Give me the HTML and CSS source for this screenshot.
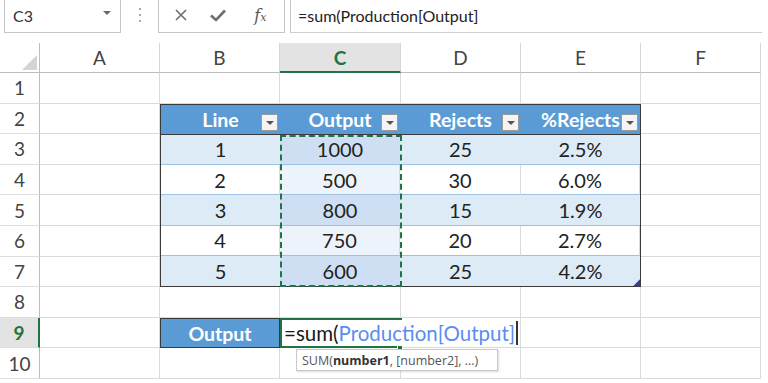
FILE: index.html
```html
<!DOCTYPE html>
<html>
<head>
<meta charset="utf-8">
<link rel="stylesheet" href="styles.css">
</head>
<body>
<div class="app">
  <div class="toolbar">
    <div class="namebox"><span class="nb-text">C3</span><span class="nb-arrow"></span></div>
    <div class="grip"><i></i><i></i><i></i></div>
    <div class="fnbox">
      <span class="slot"><svg width="14" height="14" viewBox="0 0 14 14"><path d="M2 2L12 12M12 2L2 12" stroke="#6e6e6e" stroke-width="1.6" fill="none"/></svg></span>
      <span class="slot"><svg width="18" height="14" viewBox="0 0 18 14"><path d="M2 7.5L7 12L16 2.5" stroke="#6e6e6e" stroke-width="2.6" fill="none"/></svg></span>
      <span class="slot fxslot"><span class="fx">f<span class="fxx">x</span></span></span>
    </div>
    <div class="formula">=sum(Production[Output]</div>
  </div>

  <div class="sheet">
    <!-- column headers -->
    <div class="corner"><svg width="40" height="30" viewBox="0 0 40 30"><polygon points="22,27 37,27 37,12" fill="#d4d4d4"/></svg></div>
    <div class="ch">A</div>
    <div class="ch">B</div>
    <div class="ch sel">C</div>
    <div class="ch">D</div>
    <div class="ch">E</div>
    <div class="ch">F</div>
    <div class="tail"></div>

    <!-- row 1 -->
    <div class="rh">1</div>
    <div class="c"></div><div class="c"></div><div class="c"></div><div class="c"></div><div class="c"></div><div class="c"></div>
    <div class="tail"></div>

    <!-- row 2 -->
    <div class="rh">2</div>
    <div class="c"></div>
    <div class="tbl">
      <div class="th">Line<span class="fbtn"></span></div>
      <div class="th">Output<span class="fbtn"></span></div>
      <div class="th">Rejects<span class="fbtn"></span></div>
      <div class="th">%Rejects<span class="fbtn"></span></div>

      <div class="td b">1</div><div class="td b s">1000</div><div class="td b">25</div><div class="td b">2.5%</div>
      <div class="td w">2</div><div class="td w s">500</div><div class="td w">30</div><div class="td w">6.0%</div>
      <div class="td b">3</div><div class="td b s">800</div><div class="td b">15</div><div class="td b">1.9%</div>
      <div class="td w">4</div><div class="td w s">750</div><div class="td w">20</div><div class="td w">2.7%</div>
      <div class="td b l">5</div><div class="td b s l">600</div><div class="td b l">25</div><div class="td b l">4.2%</div>

      <div class="ants"></div>
      <div class="resize"></div>
    </div>
    <div class="c"></div>
    <div class="tail"></div>

    <!-- rows 3-7 -->
    <div class="rh">3</div><div class="c"></div><div class="c"></div><div class="tail"></div>
    <div class="rh">4</div><div class="c"></div><div class="c"></div><div class="tail"></div>
    <div class="rh">5</div><div class="c"></div><div class="c"></div><div class="tail"></div>
    <div class="rh">6</div><div class="c"></div><div class="c"></div><div class="tail"></div>
    <div class="rh">7</div><div class="c"></div><div class="c"></div><div class="tail"></div>

    <!-- row 8 -->
    <div class="rh">8</div>
    <div class="c"></div><div class="c"></div><div class="c"></div><div class="c"></div><div class="c"></div><div class="c"></div>
    <div class="tail"></div>

    <!-- row 9 -->
    <div class="rh active">9</div>
    <div class="c"></div>
    <div class="label">Output</div>
    <div class="edit">
      <span class="frame"></span>
      <span class="handle"></span>
      <span class="etext">=sum(<span class="ref">Production[Output]</span></span><span class="caret"></span>
      <div class="tip">SUM(<b>number1</b>, [number2], ...)</div>
    </div>
    <div class="c"></div><div class="c"></div>
    <div class="tail"></div>

    <!-- row 10 -->
    <div class="rh">10</div>
    <div class="c"></div><div class="c"></div><div class="c"></div><div class="c"></div><div class="c"></div><div class="c"></div>
    <div class="tail"></div>
  </div>
</div>
</body>
</html>
```

FILE: styles.css
```css
* { box-sizing: border-box; }
html, body { margin: 0; padding: 0; background: #fff; }
body { font-family: Lato, "Open Sans", sans-serif; width: 768px; height: 383px; overflow: hidden; }
.app { width: 768px; height: 383px; position: relative; }

/* ---------- formula bar ---------- */
.toolbar { height: 43px; display: flex; align-items: flex-start; }
.namebox {
  margin-left: 4px; width: 117px; height: 33px;
  border: 1px solid #c6c6c6; border-top: none;
  display: flex; align-items: center; justify-content: space-between;
  padding: 0 9px 2px 8px;
}
.nb-text { font-size: 16px; color: #333; }
.nb-arrow { width: 0; height: 0; border-left: 4px solid transparent; border-right: 4px solid transparent; border-top: 4px solid #6a6a6a; margin-top: -4px; }
.grip { margin-left: 18px; width: 2px; height: 33px; display: flex; flex-direction: column; justify-content: center; gap: 4px; padding-bottom: 4px; }
.grip i { display: block; width: 2px; height: 2px; background: #a8a8a8; }
.fnbox {
  margin-left: 17px; width: 127px; height: 33px;
  border: 1px solid #c6c6c6; border-top: none;
  display: flex; align-items: center; padding-left: 3px; padding-bottom: 2px;
}
.slot { width: 38px; display: flex; justify-content: center; align-items: center; }
.fxslot { width: 48px; }
.fx { font-family: "DejaVu Serif", "Liberation Serif", serif; font-style: italic; font-size: 16px; color: #555; }
.fxx { font-size: 11px; }
.formula {
  margin-left: 5px; width: 472px; height: 33px;
  border-left: 1px solid #c6c6c6; border-bottom: 1px solid #d0d0d0;
  font-size: 16px; color: #222; padding: 6px 0 0 7px;
}

/* ---------- sheet grid ---------- */
.sheet {
  display: grid;
  grid-template-columns: 40px 120px 120px 121px 120px 120px 120px 1fr;
  grid-template-rows: 30px repeat(10, 30.6px);
}
.corner { border-right: 1px solid #bdbdbd; border-bottom: 1px solid #bdbdbd; }
.corner svg { display: block; }
.ch {
  border-right: 1px solid #d6d6d6; border-bottom: 1px solid #bdbdbd;
  display: flex; align-items: center; justify-content: center;
  font-size: 19px; color: #444;
}
.ch.sel { background: #e3e3e3; color: #217346; font-weight: 700; border-bottom: 2px solid #217346; padding-top: 1px; }
.rh {
  border-right: 1px solid #bdbdbd; border-bottom: 1px solid #dedede;
  display: flex; align-items: center; justify-content: center;
  font-size: 19px; color: #444;
}
.rh.active { background: #e3e3e3; color: #217346; font-weight: 700; border-right: 2px solid #217346; }
.c { border-right: 1px solid #dadada; border-bottom: 1px solid #dadada; }

/* ---------- table ---------- */
.tbl {
  grid-column: 3 / 7; grid-row: 3 / 9;
  position: relative; z-index: 1;
  display: grid;
  grid-template-columns: 119px 120px 121px 119px;
  grid-template-rows: repeat(6, 1fr);
  border: 1px solid #3a3a3a;
}
.th {
  background: #5b9bd5; color: #fff; font-weight: 700; font-size: 19.5px;
  display: flex; align-items: center; justify-content: center;
  border-bottom: 1px solid #3a3a3a; position: relative; white-space: nowrap; overflow: hidden;
}
.fbtn {
  position: absolute; right: 2px; bottom: 3px; width: 17px; height: 17px;
  background: #f4f4f4; border: 1px solid #9a9a9a;
}
.fbtn::after {
  content: ""; position: absolute; left: 4px; top: 6px;
  border-left: 4px solid transparent; border-right: 4px solid transparent; border-top: 4px solid #555;
}
.td {
  display: flex; align-items: center; justify-content: center;
  font-size: 20px; color: #222;
  border-bottom: 1px solid #9bc2e6;
}
.td.l { border-bottom: none; }
.td.b { background: #ddebf7; }
.td.w { background: #fff; border-right: 1px solid #dadada; }
.td.b.s { background: #cfdff3; }
.td.w.s { background: #edf3fb; }
.ants {
  position: absolute; left: 119px; top: 30px; width: 122px; bottom: -1px;
  border: 2px dashed #217346; pointer-events: none;
}
.resize {
  position: absolute; right: 0; bottom: 0; width: 7px; height: 7px;
  background: #2f3f9e; clip-path: polygon(100% 0, 100% 100%, 0 100%);
}

/* ---------- row 9 ---------- */
.label {
  background: #5b9bd5; color: #fff; font-weight: 700; font-size: 19.5px;
  border: 1px solid #3a3a3a;
  display: flex; align-items: center; justify-content: center;
}
.edit {
  grid-column: span 2; position: relative; z-index: 2;
  background: #fff; border-right: 1px solid #dadada; border-bottom: 1px solid #dadada;
  display: flex; align-items: center; padding-left: 4px; white-space: nowrap;
}
.frame {
  position: absolute; left: 0; top: 0; width: 122px; bottom: -1px;
  border-top: 2px solid #217346; border-left: 2px solid #217346; border-bottom: 2px solid #217346;
}
.handle { position: absolute; left: 117px; bottom: -3px; width: 6px; height: 5px; background: #217346; border: 1px solid #fff; }
.etext { font-size: 20.5px; color: #1a1a1a; position: relative; }
.ref { color: #5b8def; }
.caret { display: block; width: 2px; height: 24px; background: #333; margin-left: 1px; }
.tip {
  position: absolute; left: 16px; top: 31px; height: 22px; width: 202px;
  background: #fff; border: 1px solid #c8c8c8; box-shadow: 1px 1px 2px rgba(0,0,0,0.15);
  font-size: 12.5px; color: #555; padding: 2px 0 0 5px; font-family: "Open Sans", Lato, sans-serif;
}
.tip b { color: #333; }
```
